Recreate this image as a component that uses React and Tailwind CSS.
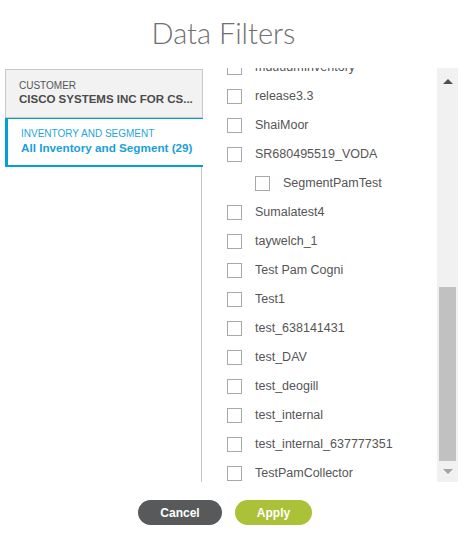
const items = [
  { name: "mduudmInventory" },
  { name: "release3.3" },
  { name: "ShaiMoor" },
  { name: "SR680495519_VODA" },
  { name: "SegmentPamTest", child: true },
  { name: "Sumalatest4" },
  { name: "taywelch_1" },
  { name: "Test Pam Cogni" },
  { name: "Test1" },
  { name: "test_638141431" },
  { name: "test_DAV" },
  { name: "test_deogill" },
  { name: "test_internal" },
  { name: "test_internal_637777351" },
  { name: "TestPamCollector" },
];

function FilterRow({ item }) {
  return (
    <label
      className={`flex items-center h-[29px] shrink-0 cursor-pointer ${
        item.child ? "pl-[52px]" : "pl-[24px]"
      }`}
    >
      <span className="w-[15px] h-[15px] border border-[#a8a8a8] bg-white shrink-0" />
      <span className="ml-[13px] text-[12.5px] text-[#555] whitespace-nowrap">
        {item.name}
      </span>
    </label>
  );
}

function Scrollbar() {
  return (
    <div className="w-[21px] bg-[#f1f1f1] flex flex-col shrink-0">
      <div className="h-[27px] flex items-center justify-center shrink-0">
        <span className="w-0 h-0 border-l-[5px] border-r-[5px] border-b-[5px] border-l-transparent border-r-transparent border-b-[#505050]" />
      </div>
      <div className="flex-1 flex flex-col px-[2px]">
        <div className="h-[192px] shrink-0" />
        <div className="flex-1 bg-[#c1c1c1]" />
      </div>
      <div className="h-[21px] flex items-center justify-center shrink-0">
        <span className="w-0 h-0 border-l-[5px] border-r-[5px] border-t-[5px] border-l-transparent border-r-transparent border-t-[#a3a3a3]" />
      </div>
    </div>
  );
}

export default function App() {
  return (
    <div className="w-[467px] h-[533px] bg-white font-['Liberation_Sans',Arial,sans-serif] flex flex-col">
      {/* Header */}
      <h1 className="pr-[20px] pt-[15px] h-[68px] text-center text-[29px] leading-[36px] font-light text-[#707070] font-['Lato',sans-serif]">
        Data Filters
      </h1>

      <div className="flex h-[414px] pl-[5px]">
        {/* Left nav */}
        <div className="w-[198px] flex flex-col shrink-0">
          <div className="mt-[1px] h-[49px] bg-[#f2f2f2] border border-[#c8c8c8] pl-[13px] pt-[10px]">
            <div className="text-[10px] leading-[12px] text-[#555]">CUSTOMER</div>
            <div className="text-[11.5px] leading-[15px] font-bold text-[#4a4a4a] whitespace-nowrap">
              CISCO SYSTEMS INC FOR CS...
            </div>
          </div>
          <div className="h-[49px] border-t border-b-2 border-l-[3px] border-[#049fd9] pl-[13px] pt-[9px]">
            <div className="text-[10px] leading-[12px] text-[#1fa6dc]">INVENTORY AND SEGMENT</div>
            <div className="text-[11.7px] leading-[16px] font-bold text-[#1a9fd9] whitespace-nowrap">
              All Inventory and Segment (29)
            </div>
          </div>
          <div className="flex-1 border-r border-[#c8c8c8] mr-[1px]" />
        </div>

        {/* List */}
        <div className="flex-1 overflow-hidden">
          <div className="flex flex-col -mt-[15px]">
            {items.map((item) => (
              <FilterRow key={item.name} item={item} />
            ))}
          </div>
        </div>
        <Scrollbar />
        <div className="w-[9px] shrink-0" />
      </div>

      {/* Footer */}
      <div className="flex justify-center gap-[13px] pt-[18px] pr-[17px]">
        <button className="w-[84px] h-[25px] rounded-full bg-[#58595b] text-white text-[12px] font-bold">
          Cancel
        </button>
        <button className="w-[77px] h-[25px] rounded-full bg-[#abc137] text-white text-[12px] font-bold">
          Apply
        </button>
      </div>
    </div>
  );
}
